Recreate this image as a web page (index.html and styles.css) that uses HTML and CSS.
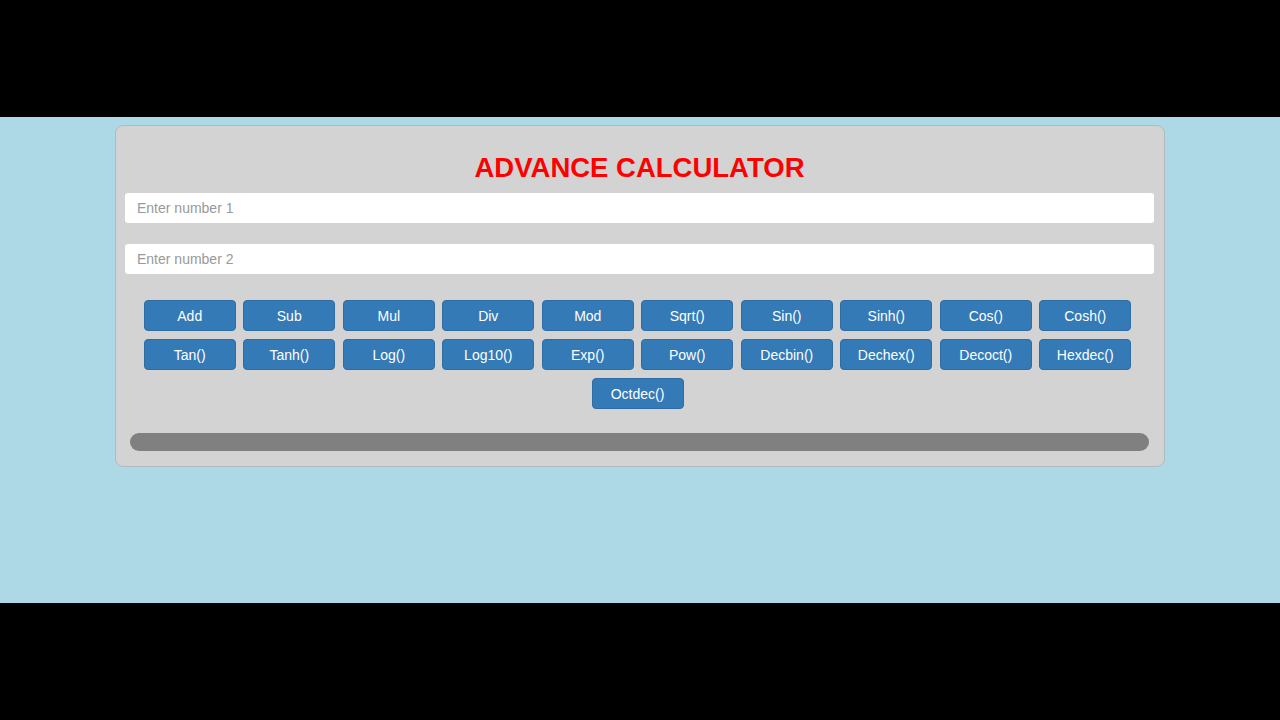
FILE: index.html
```html
<!DOCTYPE html>
<html>
<head>
<meta charset="utf-8">
<title>Advance Calculator</title>
<link rel="stylesheet" href="styles.css">
</head>
<body>
<div class="stage">
  <div class="card">
    <h1 class="title">ADVANCE CALCULATOR</h1>
    <input class="field" type="text" placeholder="Enter number 1">
    <input class="field field-2" type="text" placeholder="Enter number 2">
    <div class="buttons">
      <button class="btn">Add</button>
      <button class="btn">Sub</button>
      <button class="btn">Mul</button>
      <button class="btn">Div</button>
      <button class="btn">Mod</button>
      <button class="btn">Sqrt()</button>
      <button class="btn">Sin()</button>
      <button class="btn">Sinh()</button>
      <button class="btn">Cos()</button>
      <button class="btn">Cosh()</button>
      <button class="btn">Tan()</button>
      <button class="btn">Tanh()</button>
      <button class="btn">Log()</button>
      <button class="btn">Log10()</button>
      <button class="btn">Exp()</button>
      <button class="btn">Pow()</button>
      <button class="btn">Decbin()</button>
      <button class="btn">Dechex()</button>
      <button class="btn">Decoct()</button>
      <button class="btn">Hexdec()</button>
      <button class="btn">Octdec()</button>
    </div>
    <div class="result"></div>
  </div>
</div>
</body>
</html>
```

FILE: styles.css
```css
html, body {
  margin: 0;
  padding: 0;
  background: #000;
  font-family: "Liberation Sans", Arial, sans-serif;
}

.stage {
  margin-top: 117px;
  height: 486px;
  background: #add8e6;
  padding-top: 8px;
  box-sizing: border-box;
}

.card {
  width: 1050px;
  margin: 0 auto;
  box-sizing: border-box;
  background: #d3d3d3;
  border: 1px solid #b3b9bc;
  border-radius: 8px;
  padding: 0 10px 15px 9px;
  display: flex;
  flex-direction: column;
}

.title {
  margin: 26px 0 9px;
  font-size: 27.5px;
  line-height: 32px;
  font-weight: bold;
  color: #ff0000;
  text-align: center;
}

.field {
  display: block;
  width: 100%;
  height: 30px;
  box-sizing: border-box;
  border: none;
  border-radius: 3px;
  background: #fff;
  padding: 0 12px;
  font-family: "Liberation Sans", Arial, sans-serif;
  font-size: 14px;
  color: #333;
  outline: none;
}

.field::placeholder {
  color: #999;
}

.field-2 {
  margin-top: 21px;
}

.buttons {
  margin-top: 26px;
  display: flex;
  flex-wrap: wrap;
  justify-content: center;
  gap: 8px 7.5px;
  padding: 0 4px 0 0;
}

.btn {
  width: 92px;
  height: 31px;
  box-sizing: border-box;
  background: #337ab7;
  border: 1px solid #2e6da4;
  border-radius: 4px;
  color: #fff;
  font-family: "Liberation Sans", Arial, sans-serif;
  font-size: 14px;
  padding: 0;
  cursor: pointer;
}

.result {
  margin: 24px 5px 0;
  height: 18px;
  border-radius: 9px;
  background: #808080;
}
```
